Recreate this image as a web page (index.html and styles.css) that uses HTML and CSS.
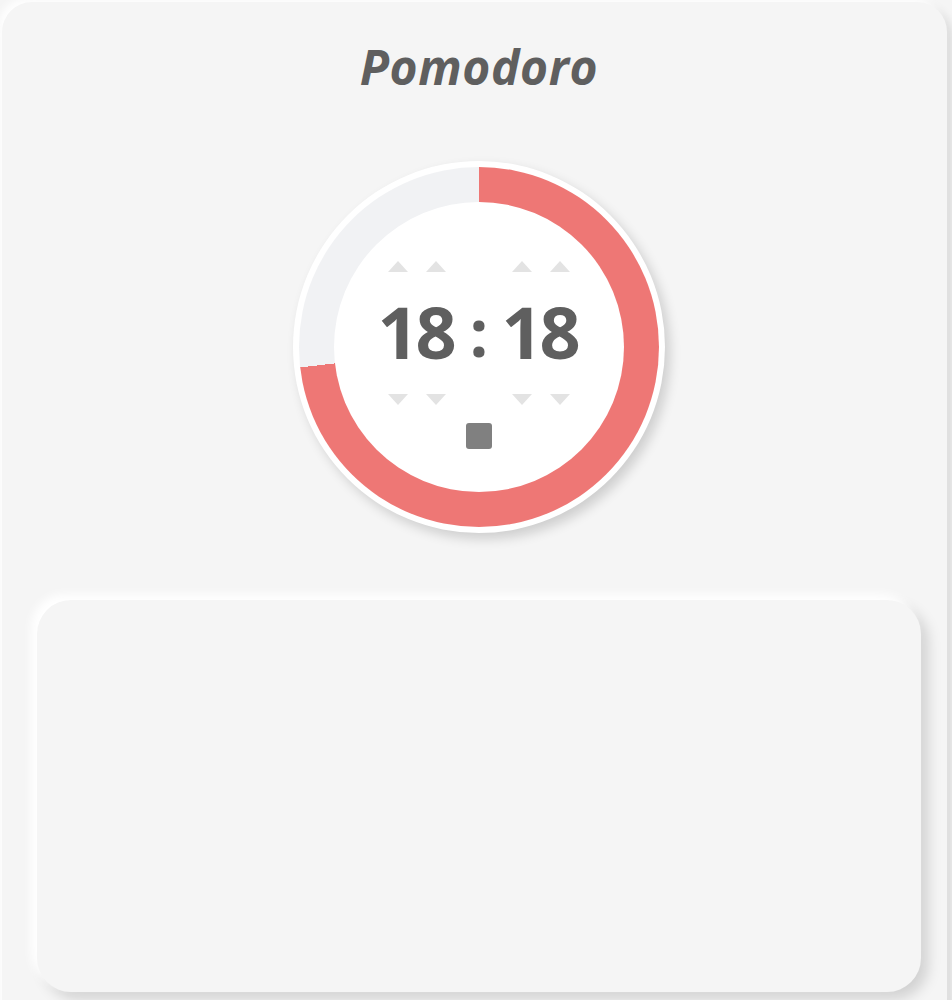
FILE: index.html
```html
<!DOCTYPE html>
<html lang="en">
<head>
<meta charset="utf-8">
<title>Pomodoro</title>
<link rel="stylesheet" href="styles.css">
</head>
<body>
<main class="card">
  <h1 class="title">Pomodoro</h1>
  <div class="dial">
    <div class="ring">
      <div class="face">
        <div class="row arrows">
          <span class="col"><i class="up"></i></span>
          <span class="col"><i class="up"></i></span>
          <span class="sep"></span>
          <span class="col"><i class="up"></i></span>
          <span class="col"><i class="up"></i></span>
        </div>
        <div class="row time">
          <span class="col">1</span>
          <span class="col">8</span>
          <span class="sep">:</span>
          <span class="col">1</span>
          <span class="col">8</span>
        </div>
        <div class="row arrows down-row">
          <span class="col"><i class="down"></i></span>
          <span class="col"><i class="down"></i></span>
          <span class="sep"></span>
          <span class="col"><i class="down"></i></span>
          <span class="col"><i class="down"></i></span>
        </div>
        <button class="stop" aria-label="Stop"></button>
      </div>
    </div>
  </div>
  <section class="panel"></section>
</main>
</body>
</html>
```

FILE: styles.css
```css
html, body {
  margin: 0;
  padding: 0;
  background: #f5f5f5;
  overflow: hidden;
}

body {
  font-family: "Open Sans", "Noto Sans", sans-serif;
  color: #5f5f5f;
}

.card {
  box-sizing: border-box;
  margin: 2px 0 0 2px;
  width: 945px;
  min-height: 1030px;
  padding: 33px 26px 0 35px;
  background: #f5f5f5;
  border-radius: 30px;
  box-shadow: -4px -4px 8px #ffffff, 4px 4px 10px rgba(0, 0, 0, 0.14);
  display: flex;
  flex-direction: column;
  align-items: center;
}

.title {
  margin: 0;
  font-size: 48px;
  line-height: 64px;
  font-weight: 700;
  font-style: italic;
  letter-spacing: 0.6px;
  color: #5f5f5f;
}

.dial {
  margin-top: 62px;
  width: 372px;
  height: 372px;
  box-sizing: border-box;
  padding: 6px;
  border-radius: 50%;
  background: #ffffff;
  box-shadow: 5px 6px 12px rgba(0, 0, 0, 0.16);
}

.ring {
  width: 360px;
  height: 360px;
  border-radius: 50%;
  background: conic-gradient(#ee7775 0deg 263.5deg, #f1f2f4 263.5deg 360deg);
  display: flex;
  align-items: center;
  justify-content: center;
}

.face {
  box-sizing: border-box;
  width: 290px;
  height: 290px;
  border-radius: 50%;
  background: #ffffff;
  display: flex;
  flex-direction: column;
  align-items: center;
  padding-top: 59px;
}

.row {
  display: flex;
  align-items: center;
}

.col {
  width: 38px;
  display: flex;
  justify-content: center;
}

.sep {
  width: 48px;
  display: flex;
  justify-content: center;
}

.arrows {
  height: 11px;
}

.up {
  display: block;
  width: 0;
  height: 0;
  border-left: 10.5px solid transparent;
  border-right: 10.5px solid transparent;
  border-bottom: 11px solid #e3e3e3;
}

.down {
  display: block;
  width: 0;
  height: 0;
  border-left: 10.5px solid transparent;
  border-right: 10.5px solid transparent;
  border-top: 11px solid #e3e3e3;
}

.time {
  margin-top: 23px;
  font-size: 72px;
  line-height: 72px;
  font-weight: 700;
  color: #5f5f5f;
}

.time .sep {
  font-size: 66px;
}

.down-row {
  margin-top: 27px;
}

.stop {
  margin-top: 18px;
  width: 26px;
  height: 26px;
  padding: 0;
  border: none;
  border-radius: 3px;
  background: #808080;
}

.panel {
  align-self: stretch;
  margin-top: 67px;
  height: 392px;
  border-radius: 34px;
  background: #f5f5f5;
  box-shadow: -6px -6px 10px #ffffff, 7px 7px 14px rgba(0, 0, 0, 0.15);
}
```
